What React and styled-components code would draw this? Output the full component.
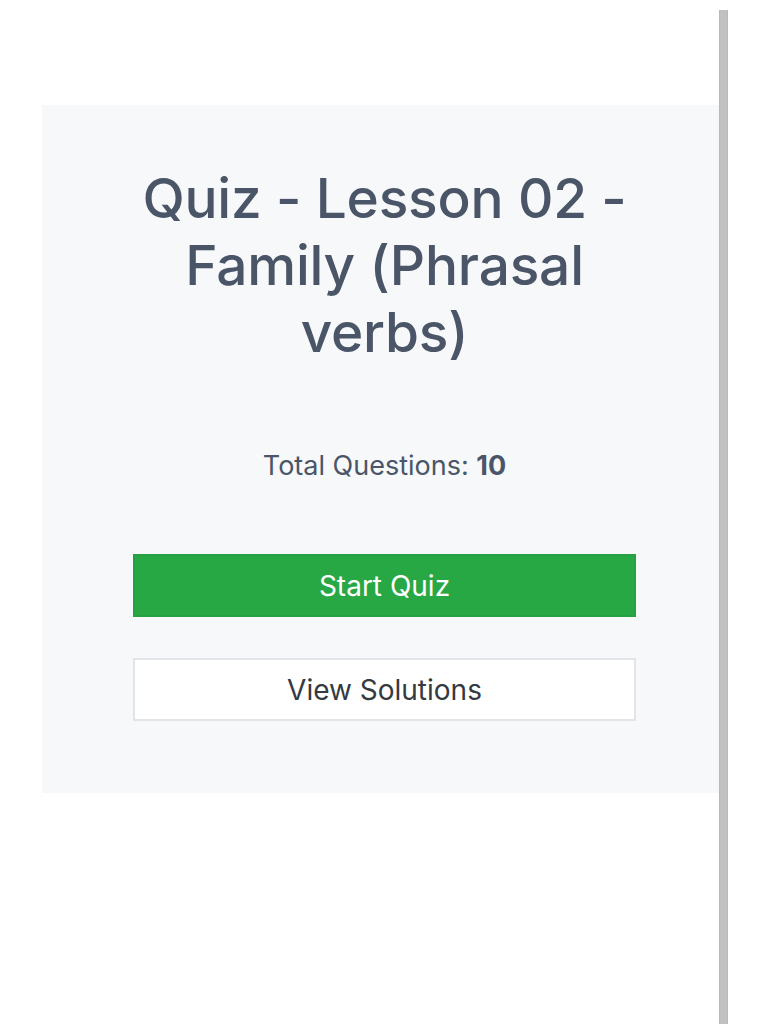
import React from "react";
import styled, { createGlobalStyle } from "styled-components";

const Global = createGlobalStyle`
  html, body {
    margin: 0;
    padding: 0;
    background: #ffffff;
  }
  body {
    font-family: Inter, "Noto Sans", "Liberation Sans", sans-serif;
    color: #4a5568;
  }
`;

const Page = styled.div`
  position: relative;
  min-height: 1024px;
  padding: 105px 41px 0 42px;
  box-sizing: border-box;
`;

const Card = styled.section`
  background: #f7f8fa;
  padding: 60px 91px 72px;
  display: flex;
  flex-direction: column;
  align-items: stretch;
`;

const Title = styled.h1`
  margin: 0;
  font-size: 55px;
  line-height: 67px;
  font-weight: 500;
  text-align: center;
  color: #4a5568;
  letter-spacing: -0.2px;
`;

const Total = styled.p`
  margin: 84px 0 0;
  text-align: center;
  font-size: 27px;
  line-height: 32px;
  color: #4a5568;

  b {
    font-weight: 700;
  }
`;

const Actions = styled.div`
  margin-top: 72px;
  display: flex;
  flex-direction: column;
  gap: 41px;
`;

const Button = styled.button`
  height: 63px;
  width: 100%;
  font-family: inherit;
  font-size: 28px;
  border-radius: 0;
  cursor: pointer;
  background: ${(p) => (p.$primary ? "#28a745" : "#ffffff")};
  color: ${(p) => (p.$primary ? "#ffffff" : "#343a40")};
  border: 2px solid ${(p) => (p.$primary ? "#27a044" : "#e2e4e7")};
`;

const ScrollThumb = styled.div`
  position: fixed;
  top: 10px;
  bottom: 0;
  left: 719px;
  width: 7px;
  background: #c1c1c1;
  border-left: 1px solid #b9b9b9;
  border-right: 1px solid #b9b9b9;
`;

export default function App() {
  return (
    <>
      <Global />
      <Page>
        <Card>
          <Title>Quiz - Lesson 02 - Family (Phrasal verbs)</Title>
          <Total>
            Total Questions: <b>10</b>
          </Total>
          <Actions>
            <Button $primary>Start Quiz</Button>
            <Button>View Solutions</Button>
          </Actions>
        </Card>
        <ScrollThumb />
      </Page>
    </>
  );
}
